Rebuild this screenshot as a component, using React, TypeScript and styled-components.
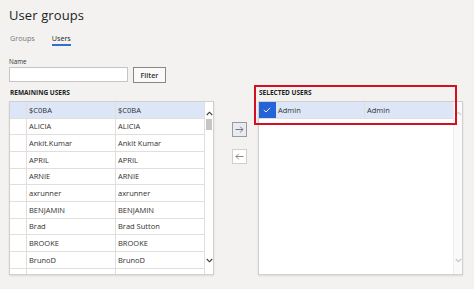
import styled, { createGlobalStyle } from 'styled-components';

const GlobalStyle = createGlobalStyle`
  html, body {
    margin: 0;
    padding: 0;
    background: #f3f2f1;
    font-family: 'Open Sans', 'Noto Sans', sans-serif;
    color: #201f1e;
  }
`;

const remainingUsers = [
  ['$C0BA', '$C0BA'],
  ['ALICIA', 'ALICIA'],
  ['Ankit.Kumar', 'Ankit Kumar'],
  ['APRIL', 'APRIL'],
  ['ARNIE', 'ARNIE'],
  ['axrunner', 'axrunner'],
  ['BENJAMIN', 'BENJAMIN'],
  ['Brad', 'Brad Sutton'],
  ['BROOKE', 'BROOKE'],
  ['BrunoD', 'BrunoD'],
  ['', ''],
];

const Chevron = ({ up, color }: { up?: boolean; color: string }) => (
  <svg width="7" height="5" viewBox="0 0 7 5">
    <polyline
      points={up ? '0.8,4 3.5,1.2 6.2,4' : '0.8,1 3.5,3.8 6.2,1'}
      fill="none"
      stroke={color}
      strokeWidth="1.1"
    />
  </svg>
);

const Arrow = ({ left, color }: { left?: boolean; color: string }) => (
  <svg width="9" height="7" viewBox="0 0 9 7">
    {left ? (
      <path d="M8.5 3.5H1 M3.8 0.7L1 3.5L3.8 6.3" fill="none" stroke={color} strokeWidth="0.9" />
    ) : (
      <path d="M0.5 3.5H8 M5.2 0.7L8 3.5L5.2 6.3" fill="none" stroke={color} strokeWidth="0.9" />
    )}
  </svg>
);

const App = () => {
  return (
    <S.Page>
      <GlobalStyle />
      <S.Title>User groups</S.Title>
      <S.Tabs>
        <S.Tab>Groups</S.Tab>
        <S.Tab active>Users</S.Tab>
      </S.Tabs>
      <S.FieldLabel>Name</S.FieldLabel>
      <S.FilterRow>
        <S.Input />
        <S.Button>Filter</S.Button>
      </S.FilterRow>

      <S.Lists>
        <S.Column>
          <S.SectionLabel>REMAINING USERS</S.SectionLabel>
          <S.Grid>
            <S.Rows>
              {remainingUsers.map(([id, name], i) => (
                <S.Row key={i} selected={i === 0}>
                  <S.MarkCell />
                  <S.Cell>{id}</S.Cell>
                  <S.Cell last>{name}</S.Cell>
                </S.Row>
              ))}
            </S.Rows>
            <S.Scrollbar>
              <S.ScrollTop>
                <Chevron up color="#3b3a39" />
              </S.ScrollTop>
              <S.Thumb />
              <S.ScrollBottom>
                <Chevron color="#3b3a39" />
              </S.ScrollBottom>
            </S.Scrollbar>
          </S.Grid>
        </S.Column>

        <S.Actions>
          <S.MoveButton primary>
            <Arrow color="#6b6b6b" />
          </S.MoveButton>
          <S.MoveButton>
            <Arrow left color="#7a7a7a" />
          </S.MoveButton>
        </S.Actions>

        <S.Column annotated>
          <S.SectionLabel>SELECTED USERS</S.SectionLabel>
          <S.Grid>
            <S.Rows>
              <S.Row selected>
                <S.MarkCell checked>
                  <svg width="8" height="6" viewBox="0 0 8 6">
                    <polyline points="0.8,3 3,5 7.2,0.8" fill="none" stroke="#fff" strokeWidth="0.9" />
                  </svg>
                </S.MarkCell>
                <S.Cell>Admin</S.Cell>
                <S.Cell last>Admin</S.Cell>
              </S.Row>
            </S.Rows>
            <S.Scrollbar faint>
              <S.ScrollTop>
                <Chevron up color="#d0d0d0" />
              </S.ScrollTop>
              <S.ScrollBottom>
                <Chevron color="#c4c4c4" />
              </S.ScrollBottom>
            </S.Scrollbar>
          </S.Grid>
          <S.Highlight />
        </S.Column>
      </S.Lists>
    </S.Page>
  );
};

const S = {
  Page: styled.div`
    padding: 7px 9px 0 9px;
    width: 474px;
    height: 289px;
    box-sizing: border-box;
    overflow: hidden;
  `,
  Title: styled.div`
    font-size: 13px;
    line-height: 16px;
    height: 16px;
    color: #201f1e;
    letter-spacing: 0.1px;
  `,
  Tabs: styled.div`
    display: flex;
    gap: 17px;
    margin-top: 10px;
    padding-left: 1px;
  `,
  Tab: styled.div<{ active?: boolean }>`
    font-size: 7.2px;
    line-height: 10px;
    padding-bottom: 1px;
    color: ${({ active }) => (active ? '#201f1e' : '#797775')};
    border-bottom: 2px solid ${({ active }) => (active ? '#2f6fd0' : 'transparent')};
  `,
  FieldLabel: styled.div`
    margin-top: 12px;
    font-size: 6.3px;
    line-height: 8px;
    color: #323130;
  `,
  FilterRow: styled.div`
    display: flex;
    align-items: flex-start;
    gap: 5px;
    margin-top: 1px;
  `,
  Input: styled.div`
    width: 119px;
    height: 15px;
    box-sizing: border-box;
    background: #fff;
    border: 1px solid #c8c6c4;
  `,
  Button: styled.div`
    width: 33px;
    height: 16px;
    box-sizing: border-box;
    display: flex;
    align-items: center;
    justify-content: center;
    background: #fafafa;
    border: 1px solid #8a8886;
    font-size: 7.2px;
    font-weight: 600;
    color: #323130;
  `,
  Lists: styled.div`
    display: flex;
    align-items: flex-start;
    margin-top: 6px;
  `,
  Column: styled.div<{ annotated?: boolean }>`
    position: ${({ annotated }) => (annotated ? 'relative' : 'static')};
    display: flex;
    flex-direction: column;
    width: 205px;
  `,
  SectionLabel: styled.div`
    font-size: 6.5px;
    line-height: 8px;
    font-weight: 700;
    color: #201f1e;
    margin-bottom: 4px;
    padding-left: 1px;
  `,
  Grid: styled.div`
    display: flex;
    height: 174px;
    box-sizing: border-box;
    background: #fff;
    border: 1px solid #d2d0ce;
    box-shadow: 0 1px 2px rgba(0, 0, 0, 0.1);
    overflow: hidden;
  `,
  Rows: styled.div`
    width: 194px;
    display: flex;
    flex-direction: column;
  `,
  Row: styled.div<{ selected?: boolean }>`
    display: grid;
    grid-template-columns: 17px 89px 88px;
    flex: 0 0 16.67px;
    box-sizing: border-box;
    border-bottom: 1px solid #e1dfdd;
    background: ${({ selected }) => (selected ? '#dce6f7' : '#fff')};
  `,
  MarkCell: styled.div<{ checked?: boolean }>`
    display: flex;
    align-items: center;
    justify-content: center;
    border-right: 1px solid ${({ checked }) => (checked ? '#2564d6' : '#e1dfdd')};
    background: ${({ checked }) => (checked ? '#2564d6' : 'transparent')};
  `,
  Cell: styled.div<{ last?: boolean }>`
    display: flex;
    align-items: center;
    padding-left: 2px;
    font-size: 7.5px;
    color: #323130;
    white-space: nowrap;
    overflow: hidden;
    border-right: ${({ last }) => (last ? 'none' : '1px solid #e1dfdd')};
  `,
  Scrollbar: styled.div<{ faint?: boolean }>`
    position: relative;
    flex: 1;
    background: ${({ faint }) => (faint ? '#fafafa' : '#fff')};
    border-left: 1px solid ${({ faint }) => (faint ? '#eeeeee' : '#e1dfdd')};
  `,
  ScrollTop: styled.div`
    display: flex;
    justify-content: center;
    padding-top: 9px;
  `,
  Thumb: styled.div`
    margin: 3px 1px 0 1px;
    height: 11px;
    background: #c8c6c4;
  `,
  ScrollBottom: styled.div`
    position: absolute;
    left: 0;
    right: 0;
    bottom: 11px;
    display: flex;
    justify-content: center;
  `,
  Actions: styled.div`
    display: flex;
    flex-direction: column;
    gap: 11.5px;
    padding: 33px 11px 0 18px;
  `,
  MoveButton: styled.div<{ primary?: boolean }>`
    width: 15px;
    height: 15px;
    box-sizing: border-box;
    display: flex;
    align-items: center;
    justify-content: center;
    background: ${({ primary }) => (primary ? '#e8ebef' : '#fff')};
    border: 1px solid ${({ primary }) => (primary ? '#9b9b9b' : '#cfcfcf')};
  `,
  Highlight: styled.div`
    position: absolute;
    left: -4px;
    top: -4px;
    width: 203px;
    height: 40px;
    box-sizing: border-box;
    border: 2px solid #d2101f;
    pointer-events: none;
  `,
};

export default App;
